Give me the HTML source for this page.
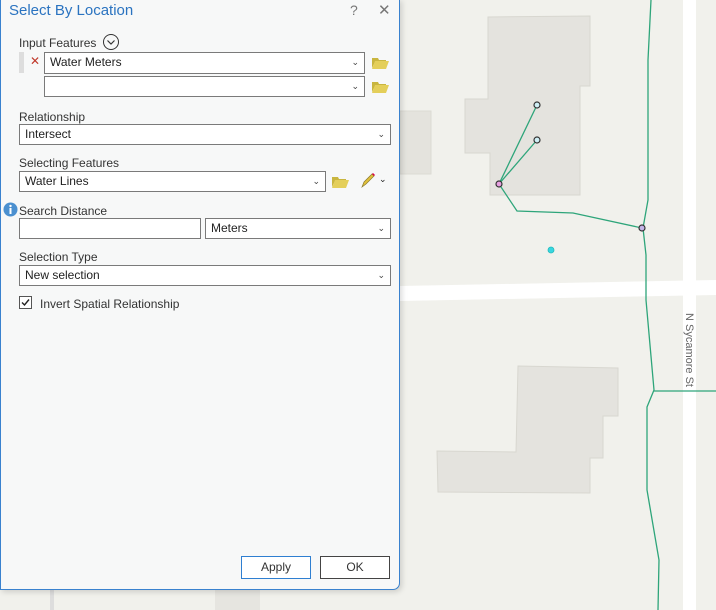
<!DOCTYPE html>
<html><head><meta charset="utf-8"><style>
body{margin:0;width:716px;height:610px;overflow:hidden;position:relative;background:#f1f1ec;font-family:"Liberation Sans",sans-serif;font-size:12px;color:#222}
.dlg{position:absolute;left:0;top:-1px;width:398px;height:590px;background:#f7f8f8;border:1px solid #3a82cf;border-top:none;border-bottom-right-radius:7px;box-shadow:2px 2px 6px rgba(0,0,0,.15)}
.in{position:absolute;left:-1px;top:1px;width:400px;height:590px}
.a{position:absolute}
.lbl{position:absolute;font-size:12px;color:#333}
.box{position:absolute;background:#fff;border:1px solid #7a7a7a;box-sizing:border-box;padding-left:5px;line-height:19px;font-size:12px}
.chev{position:absolute;right:5px;top:0;font-size:9px;color:#444}
.btn{position:absolute;box-sizing:border-box;text-align:center;line-height:21px;font-size:12px;background:#fff;color:#333}
</style></head><body>
<svg class="a" style="left:0;top:0" width="716" height="610">
<polygon points="400,111 431,111 431,174 400,174" fill="#e4e3dd" stroke="#dcdbd4"/>
<polygon points="488,17 590,16 590,86 580,86 580,195 490,195 490,153 465,153 465,99 488,99" fill="#e4e3de" stroke="#d8d7d0"/>
<polygon points="518,366 618,368 618,416 603,416 603,458 590,458 590,493 438,492 437,451 516,452" fill="#e4e3de" stroke="#d8d7d0"/>
<polygon points="400,286 716,280 716,295 400,301" fill="#fff"/>
<rect x="683" y="0" width="13" height="610" fill="#fff"/>
<text transform="translate(686,313) rotate(90)" font-size="11" fill="#666" font-family="Liberation Sans">N Sycamore St</text>
<g fill="none" stroke="#2ea57a" stroke-width="1.3">
<polyline points="651,0 648,60 648,200 643,228 646,255 646,300 654,390 647,407 647,490 659,560 658,610"/>
<polyline points="654,391 716,391"/>
<polyline points="642,228 573,213 517,211 499,184 537,105"/>
<polyline points="499,184 537,140"/>
</g>
<g stroke="#333" stroke-width="1.2">
<circle cx="537" cy="105" r="3" fill="#cfeff5"/>
<circle cx="537" cy="140" r="3" fill="#cfeff5"/>
<circle cx="499" cy="184" r="3" fill="#e7a0e0"/>
<circle cx="642" cy="228" r="3" fill="#c4b5e8"/>
</g>
<circle cx="551" cy="250" r="3" fill="#38d6e0" stroke="#2bb" stroke-width=".8"/>
<rect x="50" y="590" width="4" height="20" fill="#ddd"/><rect x="215" y="590" width="45" height="20" fill="#e6e5e0"/>
</svg>
<div class="dlg"><div class="in">
<div class="a" style="left:9px;top:2px;font-size:15px;color:#2a73c0">Select By Location</div>
<div class="a" style="left:350px;top:2px;font-size:14px;color:#777">?</div>
<div class="a" style="left:378px;top:1px;font-size:15px;color:#777">✕</div>
<div class="lbl" style="left:19px;top:36px">Input Features</div>
<svg class="a" style="left:102px;top:33px" width="18" height="18"><circle cx="9" cy="9" r="7.5" fill="none" stroke="#333"/><polyline points="5.5,7.5 9,11 12.5,7.5" fill="none" stroke="#333" stroke-width="1.2"/></svg>
<div class="a" style="left:19px;top:52px;width:5px;height:21px;background:#ddd"></div>
<div class="a" style="left:30px;top:54px;color:#c0392b;font-size:12px">✕</div>
<div class="box" style="left:44px;top:52px;width:321px;height:22px">Water Meters<span class="chev">⌄</span></div>
<div class="box" style="left:44px;top:76px;width:321px;height:21px"><span class="chev">⌄</span></div>
<svg class="a" style="left:372px;top:56px" width="17" height="13"><path d="M0,2h6l1,2h7v2H3L0,12z" fill="#c9b640"/><path d="M3,5h14l-3,8H0z" fill="#e4cf5a"/></svg>
<svg class="a" style="left:372px;top:80px" width="17" height="13"><path d="M0,2h6l1,2h7v2H3L0,12z" fill="#c9b640"/><path d="M3,5h14l-3,8H0z" fill="#e4cf5a"/></svg>
<div class="lbl" style="left:19px;top:110px">Relationship</div>
<div class="box" style="left:19px;top:124px;width:372px;height:21px">Intersect<span class="chev">⌄</span></div>
<div class="lbl" style="left:19px;top:156px">Selecting Features</div>
<div class="box" style="left:19px;top:171px;width:307px;height:21px">Water Lines<span class="chev">⌄</span></div>
<svg class="a" style="left:332px;top:175px" width="17" height="13"><path d="M0,2h6l1,2h7v2H3L0,12z" fill="#c9b640"/><path d="M3,5h14l-3,8H0z" fill="#e4cf5a"/></svg>
<svg class="a" style="left:360px;top:172px" width="16" height="17"><path d="M2,15 L4,10 L12,2 L14,4 L6,12z" fill="#e0c13a" stroke="#8a7a30" stroke-width=".7"/><path d="M12,2 l2,2 l1,-1 l-2,-2z" fill="#d04"/></svg>
<div class="a" style="left:379px;top:174px;font-size:9px">⌄</div>
<svg class="a" style="left:3px;top:202px" width="15" height="15"><circle cx="7.5" cy="7.5" r="7" fill="#4b90d0"/><rect x="6.5" y="6" width="2" height="6" fill="#fff"/><circle cx="7.5" cy="4" r="1.2" fill="#fff"/></svg>
<div class="lbl" style="left:19px;top:204px">Search Distance</div>
<div class="box" style="left:19px;top:218px;width:182px;height:21px"></div>
<div class="box" style="left:205px;top:218px;width:186px;height:21px">Meters<span class="chev">⌄</span></div>
<div class="lbl" style="left:19px;top:250px">Selection Type</div>
<div class="box" style="left:19px;top:265px;width:372px;height:21px">New selection<span class="chev">⌄</span></div>
<div class="a" style="left:19px;top:296px;width:13px;height:13px;border:1px solid #555;background:#fff;box-sizing:border-box"></div>
<svg class="a" style="left:20px;top:297px" width="11" height="11"><polyline points="2,5.5 4.5,8 9,2.5" fill="none" stroke="#222" stroke-width="1.4"/></svg>
<div class="lbl" style="left:40px;top:297px">Invert Spatial Relationship</div>
<div class="btn" style="left:241px;top:556px;width:70px;height:23px;border:1px solid #2f7fd1">Apply</div>
<div class="btn" style="left:320px;top:556px;width:70px;height:23px;border:1px solid #444">OK</div>
</div></div>
</body></html>
